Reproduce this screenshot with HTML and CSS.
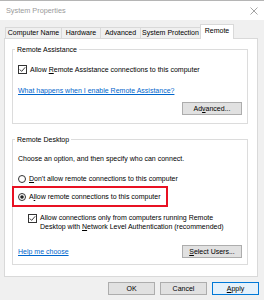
FILE: index.html
```html
<!DOCTYPE html>
<html lang="en">
<head>
  <meta charset="UTF-8" />
  <title>System Properties</title>
  <link rel="stylesheet" href="styles.css">
</head>
<body>
  <div class="window">
    <div class="titlebar">
      <span class="title">System Properties</span>
      <svg class="close" width="8" height="8" viewBox="0 0 8 8"><path d="M0.5 0.5 L7.5 7.5 M7.5 0.5 L0.5 7.5" stroke="#9a9a9a" stroke-width="0.9" fill="none"/></svg>
    </div>

    <div class="tabs">
      <div class="tab tab-name">Computer Name</div>
      <div class="tab tab-hardware">Hardware</div>
      <div class="tab tab-advanced">Advanced</div>
      <div class="tab tab-protection">System Protection</div>
      <div class="tab tab-remote active">Remote</div>
    </div>

    <div class="panel">
      <fieldset class="group group-assist">
        <legend>Remote Assistance</legend>
        <div class="row">
          <svg class="checkbox" width="9" height="9" viewBox="0 0 9 9"><rect x="0.5" y="0.5" width="8" height="8" fill="#fff" stroke="#333"/><path d="M1.8 4.5 L3.6 6.4 L7.2 2.3" fill="none" stroke="#222" stroke-width="0.9"/></svg>
          <span>Allow <u>R</u>emote Assistance connections to this computer</span>
        </div>
        <a class="link link-assist" href="#">What happens when I enable Remote Assistance?</a>
        <div class="btn-row btn-row-right">
          <button class="btn btn-wide">Ad<u>v</u>anced...</button>
        </div>
      </fieldset>

      <fieldset class="group group-desktop">
        <legend>Remote Desktop</legend>
        <div class="row">Choose an option, and then specify who can connect.</div>
        <div class="row row-radio">
          <svg class="radio" width="8" height="8" viewBox="0 0 8 8"><circle cx="4" cy="4" r="3.5" fill="#fff" stroke="#333"/></svg>
          <span><u>D</u>on't allow remote connections to this computer</span>
        </div>
        <div class="highlight">
          <div class="row">
            <svg class="radio" width="8" height="8" viewBox="0 0 8 8"><circle cx="4" cy="4" r="3.5" fill="#fff" stroke="#333"/><circle cx="4" cy="4" r="1.8" fill="#222"/></svg>
            <span>A<u>l</u>low remote connections to this computer</span>
          </div>
        </div>
        <div class="nla">
          <svg class="checkbox" width="9" height="9" viewBox="0 0 9 9"><rect x="0.5" y="0.5" width="8" height="8" fill="#fff" stroke="#333"/><path d="M1.8 4.5 L3.6 6.4 L7.2 2.3" fill="none" stroke="#222" stroke-width="0.9"/></svg>
          <div class="nla-text">
            <div class="line">Allow connections only from computers running Remote</div>
            <div class="line">Desktop with <u>N</u>etwork Level Authentication (recommended)</div>
          </div>
        </div>
        <div class="btn-row btn-row-split">
          <a class="link" href="#">Help me choose</a>
          <button class="btn btn-wide"><u>S</u>elect Users...</button>
        </div>
      </fieldset>
    </div>

    <div class="footer">
      <button class="btn">OK</button>
      <button class="btn">Cancel</button>
      <button class="btn btn-default"><u>A</u>pply</button>
    </div>
  </div>
</body>
</html>
```

FILE: styles.css
```css
body {
  margin: 0;
  font-family: 'Liberation Sans', Arial, sans-serif;
  font-size: 7px;
  line-height: 9px;
  color: #000;
  background-color: #f0f0f0;
}

.window {
  width: 264px;
  height: 300px;
  overflow: hidden;
}

u {
  text-decoration: underline;
  text-underline-offset: 1px;
}

.titlebar {
  height: 20px;
  box-sizing: border-box;
  border-top: 1px solid #b5b5b5;
  background: #fff;
  display: flex;
  align-items: center;
  justify-content: space-between;
  padding: 0 6px 0 6px;
}

.title {
  color: #9a9a9a;
  font-size: 7.3px;
}

.close {
  display: block;
}

/* tab strip */
.tabs {
  height: 18px;
  display: flex;
  align-items: flex-end;
  padding-left: 5px;
}

.tab {
  box-sizing: border-box;
  height: 11px;
  line-height: 10px;
  border: 1px solid #d9d9d9;
  border-bottom: none;
  margin-right: -1px;
  background: #f0f0f0;
  text-align: center;
  white-space: nowrap;
}

.tab-name { width: 57px; }
.tab-hardware { width: 40px; }
.tab-advanced { width: 41px; }
.tab-protection { width: 61px; }
.tab-remote { width: 34px; }

.tab.active {
  height: 15px;
  line-height: 12px;
  margin-bottom: -1px;
  background: #fff;
  position: relative;
  z-index: 1;
}

.panel {
  box-sizing: border-box;
  width: 254px;
  height: 239px;
  margin-left: 4px;
  background: #fff;
  border: 1px solid #d9d9d9;
  padding: 0 9px 0 7px;
}

.group {
  margin: 0;
  border: 1px solid #dcdcdc;
  padding: 0 5px;
  min-width: 0;
}

.group legend {
  padding: 0 2px;
  margin-left: -3px;
  line-height: 9px;
}

.group-assist {
  margin-top: 6px;
  padding-top: 11px;
  padding-bottom: 8px;
}

.group-desktop {
  margin-top: 11px;
  padding-top: 10px;
  padding-bottom: 6px;
}

.row {
  height: 9px;
  display: flex;
  align-items: center;
  white-space: nowrap;
}

.checkbox {
  flex: none;
  margin-right: 3px;
}

.radio {
  flex: none;
  margin-right: 3px;
}

.row-radio {
  margin-top: 11px;
}

.link {
  color: #0066cc;
  text-decoration: underline;
  text-underline-offset: 1px;
}

.link-assist {
  display: block;
  margin-top: 12px;
  height: 9px;
}

.highlight {
  box-sizing: border-box;
  width: 156px;
  margin-top: 3px;
  margin-left: -6px;
  padding: 4px 0 4px 4px;
  border: 2px solid #e81123;
}

.nla {
  display: flex;
  align-items: flex-start;
  margin-top: 6px;
  padding-left: 10px;
}

.nla .checkbox {
  margin-top: 1px;
}

.nla-text .line {
  white-space: nowrap;
  height: 9px;
}

.btn-row {
  display: flex;
  align-items: center;
}

.btn-row-right {
  justify-content: flex-end;
  margin-top: 7px;
}

.btn-row-split {
  justify-content: space-between;
  margin-top: 14px;
}

.btn {
  box-sizing: border-box;
  height: 13px;
  width: 47px;
  padding: 0;
  margin: 0;
  font: inherit;
  line-height: 11px;
  color: #000;
  background: #e1e1e1;
  border: 1px solid #adadad;
  border-radius: 0;
}

.btn-wide {
  width: 60px;
}

.btn-default {
  background: #e5f1fb;
  border-color: #0078d7;
}

.footer {
  display: flex;
  justify-content: flex-end;
  gap: 5px;
  margin-top: 5px;
  padding-right: 5px;
}
```
